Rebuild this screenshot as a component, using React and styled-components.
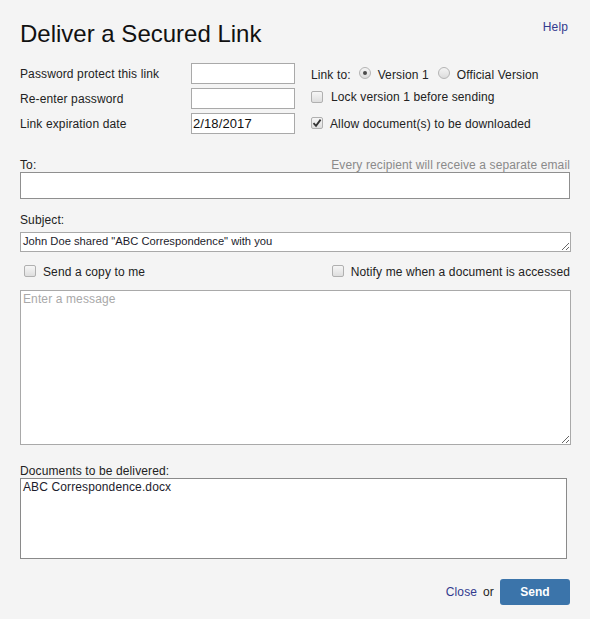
import React from "react";
import styled, { createGlobalStyle } from "styled-components";

const Global = createGlobalStyle`
  html, body { margin: 0; padding: 0; background: #f4f4f4; }
  body {
    font-family: "Liberation Sans", Arial, sans-serif;
    font-size: 12px;
    letter-spacing: 0.12px;
    color: #222;
  }
  * { box-sizing: border-box; }
`;

const Page = styled.div`
  width: 590px;
  padding: 0 20px 14px;
`;

const Header = styled.div`
  display: flex;
  justify-content: space-between;
  align-items: flex-start;
  padding-top: 20px;
`;

const Title = styled.h1`
  margin: 0;
  font-size: 24px;
  font-weight: normal;
  line-height: 28px;
  letter-spacing: 0;
  color: #111;
`;

const Link = styled.a`
  color: #323a8e;
  text-decoration: none;
  font-size: 12px;
  line-height: 14px;
  cursor: pointer;
  margin-right: ${(p) => p.$mr || 0}px;
`;

const Settings = styled.div`
  display: flex;
  gap: 16px;
  margin-top: 15px;
`;

const PasswordGrid = styled.div`
  display: grid;
  grid-template-columns: 171px 104px;
  grid-auto-rows: 21px;
  row-gap: 4px;
  align-items: center;
`;

const FieldLabel = styled.label`
  line-height: 14px;
`;

const SmallInput = styled.input`
  width: 104px;
  height: 21px;
  border: 1px solid #a9a9a9;
  background: #fff;
  padding: 0 1px;
  font-family: "Liberation Sans", Arial, sans-serif;
  font-size: 13px;
  letter-spacing: 0.1px;
  color: #111;
  outline: none;
`;

const OptionsColumn = styled.div`
  display: grid;
  grid-template-rows: 21px 24px 30px;
  padding-top: 1px;
`;

const OptionRow = styled.div`
  display: flex;
  align-items: center;
  line-height: 14px;
`;

const RadioOption = styled.span`
  display: inline-flex;
  align-items: center;
  margin-left: ${(p) => p.$ml}px;
`;

const RadioDot = styled.span`
  width: 12px;
  height: 12px;
  border-radius: 50%;
  border: 1px solid #b4b4b4;
  background: linear-gradient(#f4f4f4, #dcdcdc);
  display: inline-flex;
  align-items: center;
  justify-content: center;
  margin-right: 7px;
  margin-bottom: 4px;
  flex: none;
  &::after {
    content: "";
    width: 4px;
    height: 4px;
    border-radius: 50%;
    background: ${(p) => (p.$checked ? "#4a4a4a" : "transparent")};
  }
`;

const CheckItem = styled.label`
  display: inline-flex;
  align-items: center;
  line-height: 14px;
  margin-left: ${(p) => p.$ml || 0}px;
`;

const CheckBox = styled.span`
  width: 12px;
  height: 12px;
  border: 1px solid #b0b0b0;
  border-radius: 2px;
  background: linear-gradient(#f6f6f6, #dedede);
  display: inline-flex;
  align-items: center;
  justify-content: center;
  flex: none;
  margin-right: ${(p) => p.$gap}px;
  margin-bottom: ${(p) => p.$raise || 0}px;
  svg { display: block; }
`;

const FieldHeader = styled.div`
  display: flex;
  justify-content: space-between;
  line-height: 14px;
  margin-top: ${(p) => p.$mt}px;
`;

const Hint = styled.span`
  color: #8a8a8a;
`;

const WideInput = styled.input`
  display: block;
  width: 550px;
  height: 27px;
  border: 1px solid #8f8f8f;
  background: #fff;
  padding: 0 2px;
  font-family: "Liberation Sans", Arial, sans-serif;
  font-size: 12px;
  outline: none;
`;

const TextArea = styled.textarea`
  display: block;
  width: 551px;
  height: ${(p) => p.$h}px;
  margin-top: ${(p) => p.$mt}px;
  border: 1px solid #a9a9a9;
  background: #fff;
  padding: ${(p) => p.$pad};
  font-family: "Liberation Sans", Arial, sans-serif;
  font-size: ${(p) => p.$fs || 12}px;
  letter-spacing: 0;
  line-height: 16px;
  color: #1c1c2c;
  outline: none;
  resize: both;
  overflow: hidden;
  &::placeholder { color: #a9a9a9; letter-spacing: 0.12px; }
`;

const CheckRow = styled.div`
  display: flex;
  justify-content: space-between;
  align-items: center;
  height: 16px;
  margin-top: 12px;
`;

const DocBox = styled.div`
  width: 547px;
  height: 81px;
  border: 1px solid #8a8a8a;
  background: #fff;
  padding: 1px 2px;
  line-height: 14px;
  color: #1c1c2c;
`;

const Footer = styled.div`
  display: flex;
  justify-content: flex-end;
  align-items: center;
  margin-top: 20px;
`;

const Or = styled.span`
  margin: 0 6px;
  color: #222;
`;

const SendButton = styled.button`
  width: 70px;
  height: 26px;
  border: none;
  border-radius: 3px;
  background: #3b74aa;
  color: #fff;
  font-family: "Liberation Sans", Arial, sans-serif;
  font-size: 12px;
  font-weight: bold;
  cursor: pointer;
`;

const Check = ({ checked, gap = 7, raise = 0 }) => (
  <CheckBox $gap={gap} $raise={raise}>
    {checked && (
      <svg width="10" height="10" viewBox="0 0 10 10">
        <path d="M1.5 5.2 L4 7.8 L8.6 1.6" fill="none" stroke="#333" strokeWidth="1.8" />
      </svg>
    )}
  </CheckBox>
);

export default function App() {
  return (
    <>
      <Global />
      <Page>
        <Header>
          <Title>Deliver a Secured Link</Title>
          <Link $mr={2}>Help</Link>
        </Header>

        <Settings>
          <PasswordGrid>
            <FieldLabel>Password protect this link</FieldLabel>
            <SmallInput type="password" />
            <FieldLabel>Re-enter password</FieldLabel>
            <SmallInput type="password" />
            <FieldLabel>Link expiration date</FieldLabel>
            <SmallInput type="text" defaultValue="2/18/2017" />
          </PasswordGrid>

          <OptionsColumn>
            <OptionRow>
              <span>Link to:</span>
              <RadioOption $ml={8}>
                <RadioDot $checked />
                Version 1
              </RadioOption>
              <RadioOption $ml={9}>
                <RadioDot />
                Official Version
              </RadioOption>
            </OptionRow>
            <OptionRow>
              <CheckItem>
                <Check gap={8} />
                Lock version 1 before sending
              </CheckItem>
            </OptionRow>
            <OptionRow>
              <CheckItem>
                <Check checked gap={7} raise={2} />
                Allow document(s) to be downloaded
              </CheckItem>
            </OptionRow>
          </OptionsColumn>
        </Settings>

        <FieldHeader $mt={19}>
          <span>To:</span>
          <Hint>Every recipient will receive a separate email</Hint>
        </FieldHeader>
        <WideInput type="text" />

        <FieldHeader $mt={14}>
          <span>Subject:</span>
        </FieldHeader>
        <TextArea
          $h={20}
          $mt={5}
          $fs={11.2}
          $pad="0 2px"
          rows={1}
          defaultValue={'John Doe shared "ABC Correspondence" with you'}
        />

        <CheckRow>
          <CheckItem $ml={4}>
            <Check gap={7} raise={3} />
            Send a copy to me
          </CheckItem>
          <CheckItem>
            <Check gap={7} raise={3} />
            Notify me when a document is accessed
          </CheckItem>
        </CheckRow>

        <TextArea $h={155} $mt={10} $pad="0 2px" placeholder="Enter a message" />

        <FieldHeader $mt={19}>
          <span>Documents to be delivered:</span>
        </FieldHeader>
        <DocBox>ABC Correspondence.docx</DocBox>

        <Footer>
          <Link>Close</Link>
          <Or>or</Or>
          <SendButton>Send</SendButton>
        </Footer>
      </Page>
    </>
  );
}
